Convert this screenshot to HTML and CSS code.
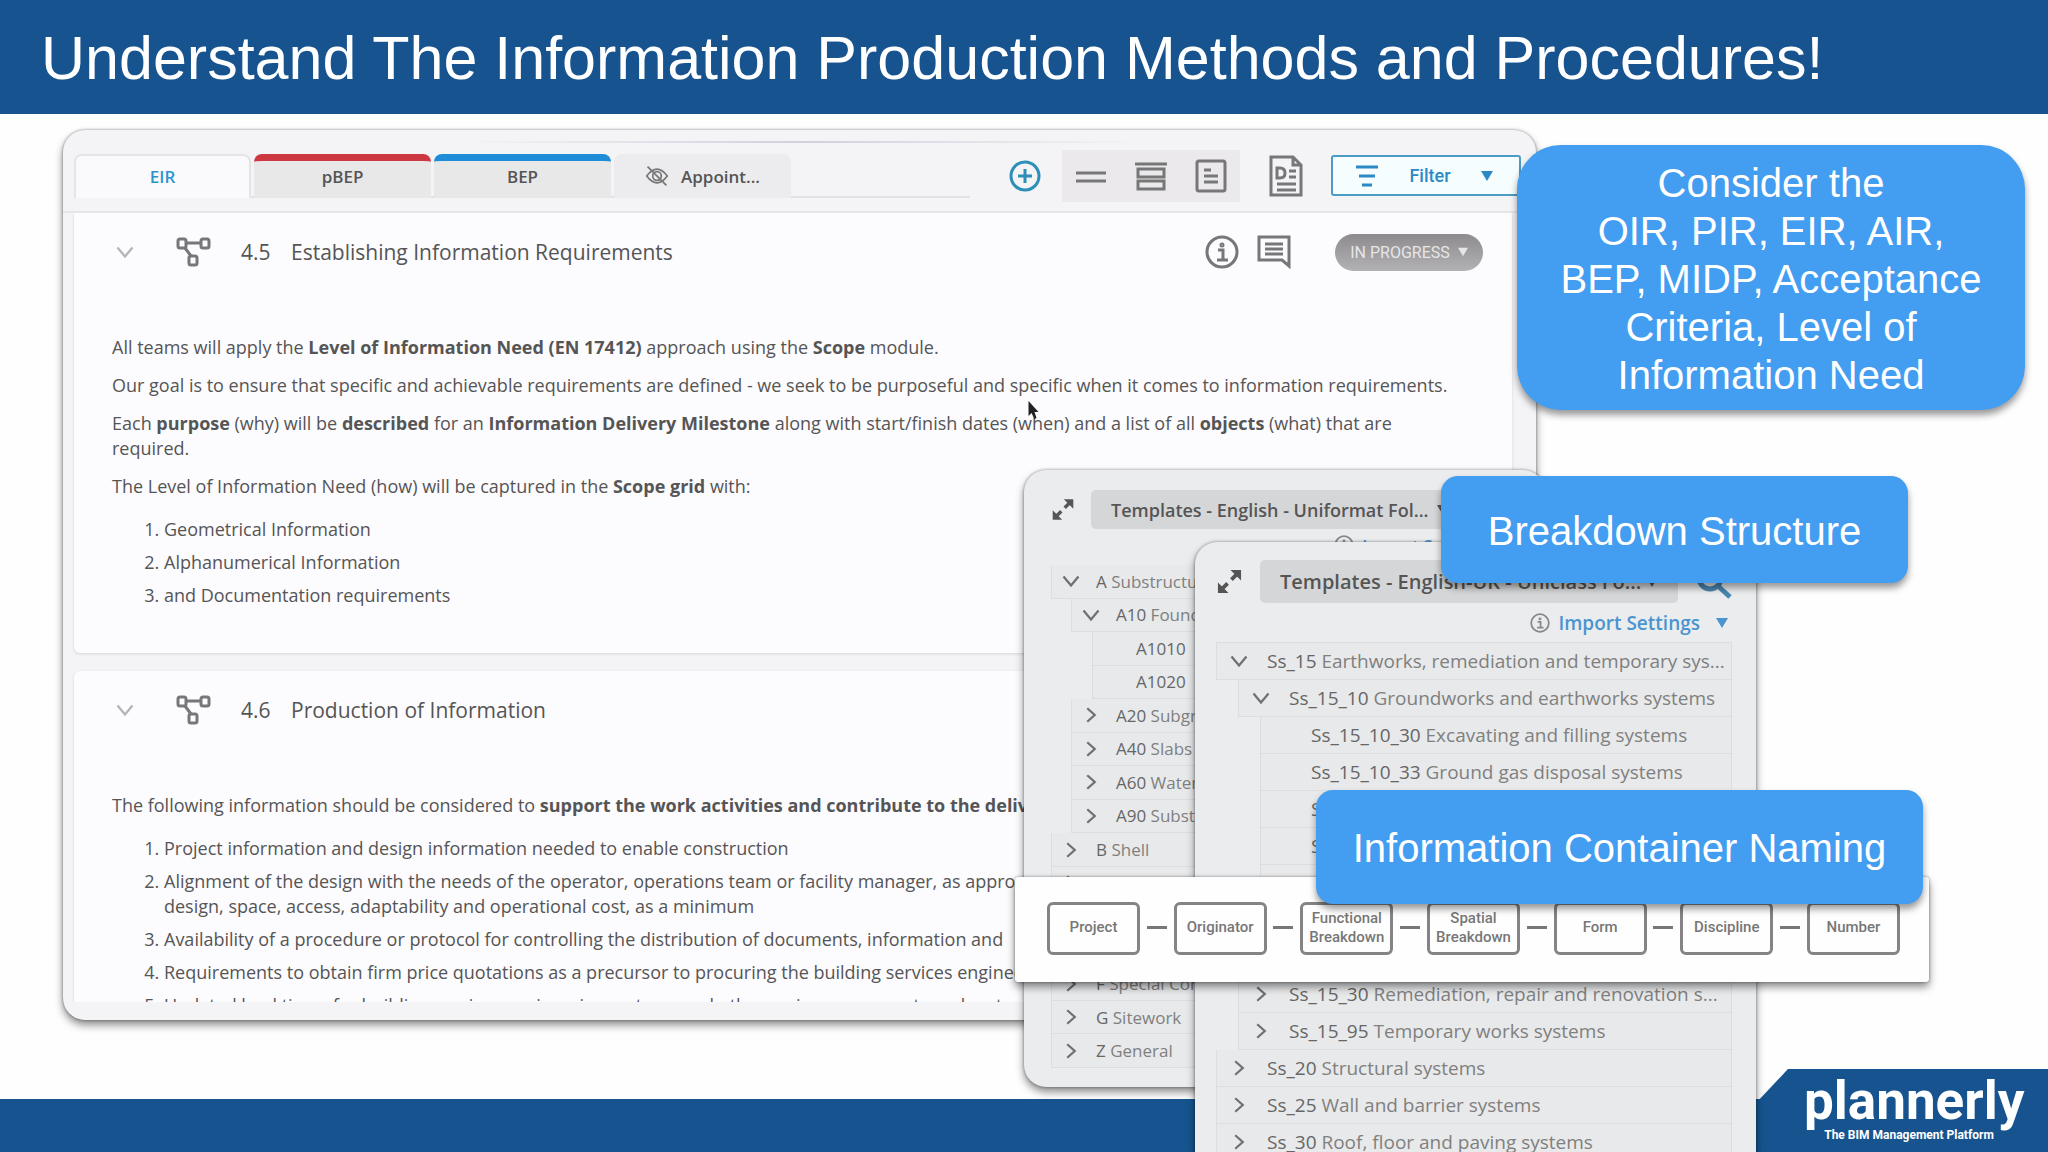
FILE: index.html
```html
<!DOCTYPE html>
<html lang="en">
<head>
  <meta charset="UTF-8">
  <meta name="viewport" content="width=device-width, initial-scale=1">
  <title>Information Production Methods and Procedures</title>
  <link rel="stylesheet" href="styles.css">
</head>
<body>

  <!-- shared icons -->
  <svg class="sprite" aria-hidden="true">
    <symbol id="down" viewBox="0 0 24 24"><path d="M2 6l10 12L22 6"/></symbol>
    <symbol id="right" viewBox="0 0 24 24"><path d="M7 3l10 9-10 9"/></symbol>
    <symbol id="caret" viewBox="0 0 12 12"><path d="M0 1h12L6 11z"/></symbol>
    <symbol id="flow" viewBox="0 0 36 30"><rect x="2" y="2" width="8" height="9" rx="2"/><rect x="25" y="2" width="8" height="9" rx="2"/><rect x="13" y="19" width="8" height="9" rx="2"/><path d="M10 6h15M9 11l6 8"/></symbol>
    <symbol id="expand" viewBox="0 0 28 28"><path class="line" d="M16 12l7-7M12 16l-7 7"/><path d="M15 2h11v11zM2 15v11h11z"/></symbol>
    <symbol id="info" viewBox="0 0 34 34"><circle cx="17" cy="17" r="15"/><path d="M13 15h5v10M12 25h11"/><circle class="dot" cx="17" cy="10" r="1"/></symbol>
  </svg>

  <header class="title-bar">
    <h1>Understand The Information Production Methods and Procedures!</h1>
  </header>

  <main>
    <div class="window editor">
      <div class="toolbar">
        <nav class="tabs">
          <button class="tab active">EIR</button>
          <button class="tab red">pBEP</button>
          <button class="tab blue">BEP</button>
          <button class="tab plain">
            <svg class="icon eye" viewBox="0 0 28 26"><path d="M2 13q12-16 24 0-12 16-24 0z"/><circle cx="14" cy="13" r="5"/><path d="M3 2l22 22"/></svg>
            Appoint...
          </button>
        </nav>
        <div class="tools">
          <button class="tool add" aria-label="Add">
            <svg class="icon" viewBox="0 0 34 34"><circle cx="17" cy="17" r="14"/><path d="M17 10v14M10 17h14"/></svg>
          </button>
          <div class="view-group">
            <button class="tool" aria-label="Compact view">
              <svg class="icon" viewBox="0 0 34 34"><path d="M2 14h30M2 22h30"/></svg>
            </button>
            <button class="tool" aria-label="Block view">
              <svg class="icon" viewBox="0 0 34 34"><path d="M1 5h32"/><rect x="4" y="10" width="26" height="8"/><rect x="4" y="22" width="26" height="8"/></svg>
            </button>
            <button class="tool" aria-label="Page view">
              <svg class="icon" viewBox="0 0 34 34"><rect x="3" y="2" width="28" height="30" rx="2"/><path d="M10 11h7M10 17h14M10 23h14"/></svg>
            </button>
          </div>
          <button class="tool doc" aria-label="Document">
            <svg class="icon" viewBox="0 0 34 42"><path d="M2 2h22l8 8v30H2zM24 2v8h8M8 29h19M8 35h19M20 16h7M20 22h7M8 13v10h3q5 0 5-5t-5-5z"/></svg>
          </button>
          <button class="filter">
            <svg class="icon" viewBox="0 0 24 24"><path d="M1 3h22M4 12h16M7 21h10"/></svg>
            Filter
            <svg class="caret"><use href="#caret"/></svg>
          </button>
        </div>
      </div>

      <div class="content">
        <section class="card">
          <div class="card-head">
            <svg class="icon toggle"><use href="#down"/></svg>
            <svg class="icon flow"><use href="#flow"/></svg>
            <span class="num">4.5</span>
            <h2>Establishing Information Requirements</h2>
            <svg class="icon info"><use href="#info"/></svg>
            <svg class="icon comment" viewBox="0 0 34 34"><path d="M2 2h30v29l-7-6H2zM8 9h18M8 14h18M8 19h18"/></svg>
            <button class="status">IN PROGRESS <svg class="caret"><use href="#caret"/></svg></button>
          </div>
          <div class="card-body">
            <p>All teams will apply the <b>Level of Information Need (EN 17412)</b> approach using the <b>Scope</b> module.</p>
            <p>Our goal is to ensure that specific and achievable requirements are defined - we seek to be purposeful and specific when it comes to information requirements.</p>
            <p>Each <b>purpose</b> (why) will be <b>described</b> for an <b>Information Delivery Milestone</b> along with start/finish dates (when) and a list of all <b>objects</b> (what) that are<br>required.</p>
            <p>The Level of Information Need (how) will be captured in the <b>Scope grid</b> with:</p>
            <ol>
              <li>Geometrical Information</li>
              <li>Alphanumerical Information</li>
              <li>and Documentation requirements</li>
            </ol>
          </div>
        </section>

        <section class="card">
          <div class="card-head">
            <svg class="icon toggle"><use href="#down"/></svg>
            <svg class="icon flow"><use href="#flow"/></svg>
            <span class="num">4.6</span>
            <h2>Production of Information</h2>
          </div>
          <div class="card-body">
            <p>The following information should be considered to <b>support the work activities and contribute to the delivery</b></p>
            <ol>
              <li>Project information and design information needed to enable construction</li>
              <li>Alignment of the design with the needs of the operator, operations team or facility manager, as appropriate<br>design, space, access, adaptability and operational cost, as a minimum</li>
              <li>Availability of a procedure or protocol for controlling the distribution of documents, information and</li>
              <li>Requirements to obtain firm price quotations as a precursor to procuring the building services engineering</li>
              <li>Updated lead times for building services engineering systems and other major components and systems</li>
            </ol>
          </div>
        </section>
      </div>

      <svg class="cursor" viewBox="0 0 12 20"><path d="M1 1v15l3-3 3 6 2-1-2-6h4z"/></svg>
    </div>

    <div class="window panel uniformat">
      <div class="panel-head">
        <svg class="expand"><use href="#expand"/></svg>
        <button class="template">Templates - English - Uniformat Fol... <svg class="caret"><use href="#caret"/></svg></button>
      </div>
      <div class="import">
        <svg class="icon"><use href="#info"/></svg>
        <a href="#">Import Settings</a>
        <svg class="caret"><use href="#caret"/></svg>
      </div>
      <ul class="tree">
        <li><svg class="icon"><use href="#down"/></svg><b>A</b> Substructure</li>
        <li class="l1"><svg class="icon"><use href="#down"/></svg><b>A10</b> Foundations</li>
        <li class="l2"><b>A1010</b></li>
        <li class="l2"><b>A1020</b></li>
        <li class="l1"><svg class="icon"><use href="#right"/></svg><b>A20</b> Subgrade</li>
        <li class="l1"><svg class="icon"><use href="#right"/></svg><b>A40</b> Slabs</li>
        <li class="l1"><svg class="icon"><use href="#right"/></svg><b>A60</b> Water</li>
        <li class="l1"><svg class="icon"><use href="#right"/></svg><b>A90</b> Substructure</li>
        <li><svg class="icon"><use href="#right"/></svg><b>B</b> Shell</li>
        <li><svg class="icon"><use href="#right"/></svg><b>C</b></li>
        <li><svg class="icon"><use href="#right"/></svg><b>D</b></li>
        <li><svg class="icon"><use href="#right"/></svg><b>E</b></li>
        <li><svg class="icon"><use href="#right"/></svg><b>F</b> Special Construction</li>
        <li><svg class="icon"><use href="#right"/></svg><b>G</b> Sitework</li>
        <li><svg class="icon"><use href="#right"/></svg><b>Z</b> General</li>
      </ul>
    </div>

    <div class="window panel uniclass">
      <div class="panel-head">
        <svg class="expand"><use href="#expand"/></svg>
        <button class="template">Templates - English-UK - Uniclass Fo... <svg class="caret"><use href="#caret"/></svg></button>
        <svg class="icon search" viewBox="0 0 36 36"><circle cx="14" cy="14" r="11"/><path d="M22 22l12 11"/></svg>
      </div>
      <div class="import">
        <svg class="icon"><use href="#info"/></svg>
        <a href="#">Import Settings</a>
        <svg class="caret"><use href="#caret"/></svg>
      </div>
      <ul class="tree">
        <li><svg class="icon"><use href="#down"/></svg><b>Ss_15</b> Earthworks, remediation and temporary sys...</li>
        <li class="l1"><svg class="icon"><use href="#down"/></svg><b>Ss_15_10</b> Groundworks and earthworks systems</li>
        <li class="l2"><b>Ss_15_10_30</b> Excavating and filling systems</li>
        <li class="l2"><b>Ss_15_10_33</b> Ground gas disposal systems</li>
        <li class="l2"><b>Ss_15_10</b></li>
        <li class="l2"><b>Ss_15_10</b></li>
        <li class="l2"><b>Ss_15_10</b></li>
        <li class="l2"><b>Ss_15_10</b></li>
        <li class="l2"><b>Ss_15_10</b></li>
        <li class="l1"><svg class="icon"><use href="#right"/></svg><b>Ss_15_30</b> Remediation, repair and renovation s...</li>
        <li class="l1"><svg class="icon"><use href="#right"/></svg><b>Ss_15_95</b> Temporary works systems</li>
        <li><svg class="icon"><use href="#right"/></svg><b>Ss_20</b> Structural systems</li>
        <li><svg class="icon"><use href="#right"/></svg><b>Ss_25</b> Wall and barrier systems</li>
        <li><svg class="icon"><use href="#right"/></svg><b>Ss_30</b> Roof, floor and paving systems</li>
      </ul>
    </div>

    <div class="naming">
      <span class="part">Project</span>
      <span class="part">Originator</span>
      <span class="part">Functional Breakdown</span>
      <span class="part">Spatial Breakdown</span>
      <span class="part">Form</span>
      <span class="part">Discipline</span>
      <span class="part">Number</span>
    </div>

    <div class="callout consider">Consider the<br>OIR, PIR, EIR, AIR,<br>BEP, MIDP, Acceptance<br>Criteria, Level of<br>Information Need</div>
    <div class="callout breakdown">Breakdown Structure</div>
    <div class="callout container">Information Container Naming</div>
  </main>

  <footer>
    <div class="brand">
      <div class="logo">plannerly</div>
      <div class="tagline">The BIM Management Platform</div>
    </div>
  </footer>

</body>
</html>
```

FILE: styles.css
```css
* {
  box-sizing: border-box;
}

body {
  margin: 0;
  height: 100vh;
  overflow: hidden;
  display: flex;
  flex-direction: column;
  background: #fefefe;
  color: #555;
  font-family: "Open Sans", "Noto Sans", sans-serif;
}

button {
  border: none;
  background: none;
  padding: 0;
  color: inherit;
  font-family: inherit;
}

.sprite {
  position: absolute;
  width: 0;
  height: 0;
}

.icon {
  flex: none;
  fill: none;
  stroke: currentColor;
  stroke-width: 3;
}

.line {
  stroke: #555;
  stroke-width: 4;
}

.caret {
  flex: none;
  width: 12px;
  height: 12px;
  fill: currentColor;
}

.title-bar {
  height: 114px;
  flex: none;
  display: flex;
  align-items: center;
  padding: 2px 41px 0;
  background: #17548f;
  color: #fff;
}

.title-bar h1 {
  margin: 0;
  font: 61px "Liberation Sans", Arial, sans-serif;
  white-space: nowrap;
}

main {
  position: relative;
  z-index: 1;
  flex: 1;
  min-height: 0;
  display: flex;
}

.window {
  border-radius: 22px;
  background: #f4f3f6;
  box-shadow: 0 5px 8px rgba(0, 0, 0, 0.45), 0 0 3px rgba(0, 0, 0, 0.4);
}

/* editor window */
.editor {
  position: relative;
  flex: 1;
  margin: 16px 25% 79px 63px;
  padding-bottom: 18px;
  display: flex;
  flex-direction: column;
}

.toolbar {
  height: 83px;
  flex: none;
  display: flex;
  align-items: center;
  justify-content: space-between;
  padding: 10px 15px 0 11px;
  border-bottom: 2px solid #e6e5e8;
  background: linear-gradient(90deg, transparent, #d3d0dc, transparent) 400px 11px / 680px 2px no-repeat;
}

.tabs {
  flex: 1;
  height: 44px;
  max-width: 896px;
  display: flex;
  gap: 3px;
  border-bottom: 2px solid #e2e2e4;
}

.tab {
  width: 177px;
  height: 44px;
  display: flex;
  align-items: center;
  justify-content: center;
  gap: 12px;
  border-top: 7px solid transparent;
  border-radius: 8px 8px 0 0;
  padding-bottom: 6px;
  background: #e8e8e9;
  font-size: 17px;
  font-weight: 600;
}

.tab.active {
  border: 2px solid #e4e4e6;
  border-bottom: none;
  padding-bottom: 0;
  background: #fafafc;
  color: #2a93cf;
}

.tab.red {
  border-top-color: #cd3740;
}

.tab.blue {
  border-top-color: #1f8cd8;
}

.tab.plain {
  background: #ececee;
}

.eye {
  width: 24px;
  height: 24px;
  color: #777;
  stroke-width: 2;
}

.tools {
  display: flex;
  align-items: center;
}

.tool {
  display: flex;
  color: #777;
}

.tool .icon {
  width: 34px;
  height: 34px;
}

.add {
  margin-right: 20px;
  color: #2b8fb8;
}

.view-group {
  display: flex;
  gap: 26px;
  padding: 9px 12px;
  background: #ebe9ec;
}

.tool.doc {
  margin: 0 28px 0 29px;
}

.doc .icon {
  height: 42px;
}

.filter {
  width: 190px;
  height: 41px;
  display: flex;
  align-items: center;
  justify-content: space-between;
  padding: 0 26px 0 22px;
  border: 2px solid #4a9cc4;
  border-radius: 3px;
  background: #f5fdff;
  color: #2b8ac6;
  font: 500 18px Roboto, sans-serif;
}

.filter .icon {
  width: 24px;
  height: 24px;
}

.content {
  flex: 1;
  min-height: 0;
  overflow: hidden;
  padding: 0 24px 0 11px;
}

.card {
  border-radius: 0 0 6px 6px;
  background: #fcfbfe;
  box-shadow: 0 1px 3px #d5d4d8;
}

.card + .card {
  margin-top: 18px;
  border-radius: 6px;
}

.card-head {
  height: 78px;
  display: flex;
  align-items: center;
  padding: 0 29px 0 39px;
  font-size: 21px;
}

.card-head h2 {
  flex: 1;
  margin: 0;
  font-size: 21px;
  font-weight: 400;
}

.num {
  width: 50px;
}

.toggle {
  width: 24px;
  height: 18px;
  margin-right: 39px;
  color: #b5b4b8;
}

.flow {
  width: 36px;
  height: 30px;
  margin-right: 29px;
  color: #777;
}

.info,
.comment {
  width: 34px;
  height: 34px;
  margin-right: 18px;
  color: #777;
}

.comment {
  margin-right: 44px;
}

.status {
  width: 148px;
  height: 37px;
  display: flex;
  align-items: center;
  justify-content: center;
  gap: 8px;
  border-radius: 19px;
  background: linear-gradient(#8d8b8e, #b2b1b4);
  color: #e6e6e6;
  font: 16px Roboto, sans-serif;
}

.status .caret {
  width: 10px;
}

.card-body {
  padding: 44px 38px 45px;
  font-size: 18px;
  line-height: 25px;
  white-space: nowrap;
}

.card-body p {
  margin: 0 0 13px;
}

.card-body ol {
  margin: 18px 0 0;
  padding-left: 52px;
}

.card-body li + li {
  margin-top: 8px;
}

.cursor {
  position: absolute;
  top: 270px;
  left: 964px;
  width: 13px;
  height: 20px;
  fill: #222;
}

/* breakdown panels */
.panel {
  position: absolute;
  display: flex;
  flex-direction: column;
  background: #ebeced;
}

.uniformat {
  top: 356px;
  bottom: 12px;
  left: 50%;
  right: 503px;
  padding: 20px 24px 19px 27px;
  font-size: 17px;
}

.uniclass {
  top: 428px;
  bottom: -53px;
  left: 1195px;
  right: 292px;
  padding: 18px 24px 0 21px;
  border-radius: 22px 22px 0 0;
  font-size: 19px;
}

.panel-head {
  flex: none;
  display: flex;
  align-items: center;
}

.expand {
  flex: none;
  width: 27px;
  height: 27px;
  margin-right: 17px;
  fill: #555;
}

.uniformat .expand {
  width: 24px;
  margin-right: 16px;
}

.template {
  width: 420px;
  height: 43px;
  display: flex;
  align-items: center;
  justify-content: space-between;
  padding: 0 20px;
  border-radius: 5px;
  background: #d5d6d7;
  font-size: 20px;
  font-weight: 600;
}

.uniformat .template {
  width: 378px;
  height: 39px;
  font-size: 18px;
}

.search {
  width: 36px;
  height: 36px;
  margin-left: 18px;
  color: #4a86b0;
  stroke-width: 5;
}

.import {
  height: 39px;
  flex: none;
  display: flex;
  align-items: center;
  justify-content: flex-end;
  gap: 8px;
  padding-right: 4px;
  color: #4a94cf;
}

.import a {
  margin-right: 8px;
  color: inherit;
  text-decoration: none;
  font-weight: 600;
}

.import .icon {
  width: 20px;
  height: 20px;
  color: #888;
}

.uniformat .import {
  height: 36px;
  padding-bottom: 4px;
}

.tree {
  flex: 1;
  display: flex;
  flex-direction: column;
  margin: 0;
  padding: 0;
  list-style: none;
  color: #808080;
  white-space: pre;
}

.tree li {
  flex: 1;
  display: flex;
  align-items: center;
  padding-left: 12px;
  border: 1px solid #dcdddf;
  border-top: none;
  background: #e8e9ea;
}

.tree b {
  color: #666;
  font-weight: 500;
}

.tree .icon {
  width: 20px;
  height: 18px;
  margin-right: 18px;
  color: #707070;
}

.tree .l1 {
  margin-left: 22px;
}

.tree .l2 {
  margin-left: 44px;
  padding-left: 50px;
}

.uniclass .tree {
  border-top: 1px solid #dcdddf;
}

.uniclass .tree li {
  flex: none;
  height: 37px;
}

.uniformat .tree li {
  padding-left: 9px;
}

.uniformat .tree .l1 {
  margin-left: 20px;
}

.uniformat .tree .l2 {
  margin-left: 41px;
  padding-left: 43px;
}

.uniformat .tree .icon {
  margin-right: 15px;
}

/* container naming strip */
.naming {
  position: absolute;
  top: 763px;
  left: 1015px;
  right: 119px;
  display: flex;
  justify-content: space-between;
  padding: 25px 29px 27px 32px;
  border-radius: 3px;
  background: #fefefe;
  box-shadow: 0 5px 8px rgba(0, 0, 0, 0.45), 0 0 3px rgba(0, 0, 0, 0.4);
}

.part {
  position: relative;
  width: 93px;
  height: 53px;
  display: flex;
  align-items: center;
  justify-content: center;
  border: 3px solid #858386;
  border-radius: 6px;
  padding-bottom: 2px;
  color: #777;
  font: 500 15px/19px Roboto, sans-serif;
  text-align: center;
}

.part + .part::before {
  content: "";
  position: absolute;
  left: -30px;
  width: 20px;
  height: 3px;
  background: #777;
}

/* callouts */
.callout {
  position: absolute;
  display: flex;
  align-items: center;
  justify-content: center;
  border-radius: 17px;
  padding-top: 2px;
  background: #439df0;
  color: #fff;
  box-shadow: 0 5px 7px rgba(0, 0, 0, 0.4);
  font: 40px/48px "Liberation Sans", Arial, sans-serif;
  text-align: center;
  white-space: nowrap;
}

.consider {
  top: 31px;
  right: 23px;
  width: 508px;
  height: 265px;
  border-radius: 44px;
}

.breakdown {
  top: 362px;
  right: 140px;
  width: 467px;
  height: 107px;
}

.container {
  top: 676px;
  right: 125px;
  width: 607px;
  height: 114px;
}

footer {
  position: relative;
  height: 53px;
  flex: none;
  background: #17548f;
}

.brand {
  position: absolute;
  right: 0;
  bottom: 0;
  width: 292px;
  height: 83px;
  padding: 6px 24px 0 48px;
  background: #17548f;
  clip-path: polygon(32px 0, 100% 0, 100% 100%, 0 100%, 0 34px);
  color: #fff;
  text-align: center;
}

.logo {
  font: bold 53px/52px Roboto, sans-serif;
}

.tagline {
  padding-right: 10px;
  font: bold 12px/16px Roboto, sans-serif;
}
```
